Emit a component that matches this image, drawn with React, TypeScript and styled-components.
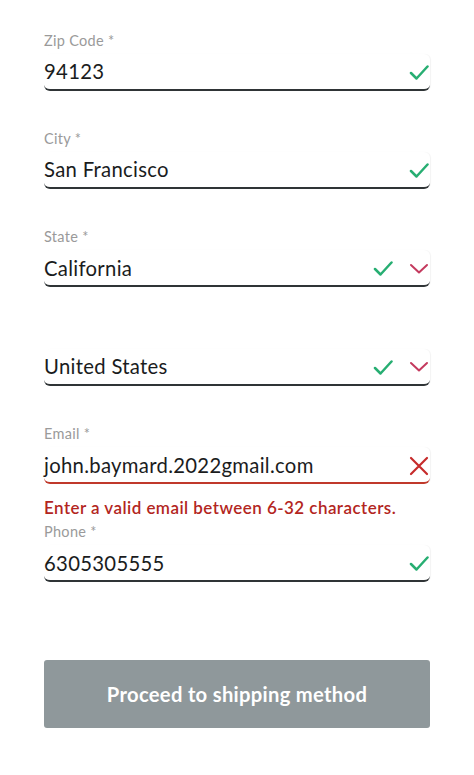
import React from "react";
import styled, { createGlobalStyle } from "styled-components";

const GlobalStyle = createGlobalStyle`
  html, body {
    margin: 0;
    padding: 0;
    background: #ffffff;
  }
  body {
    font-family: "Lato", "Open Sans", "Liberation Sans", sans-serif;
  }
`;

const Page = styled.div`
  width: 474px;
  min-height: 775px;
  box-sizing: border-box;
  padding: 30.5px 44px 0 44px;
  display: flex;
  flex-direction: column;
`;

const Field = styled.div`
  display: flex;
  flex-direction: column;
  height: 98.4px;
`;

const Label = styled.div`
  height: 19px;
  font-size: 14.5px;
  color: #9a9a9a;
  letter-spacing: 0.3px;
  line-height: 19px;
`;

const InputRow = styled.div<{ $error?: boolean }>`
  margin-top: 4px;
  height: 37px;
  box-sizing: border-box;
  display: flex;
  align-items: center;
  border-radius: 6px;
  border-bottom: 2px solid ${p => (p.$error ? "#c0392b" : "#2f3436")};
  box-shadow: 1px 0 1px rgba(0, 0, 0, 0.05);
`;

const Value = styled.div`
  flex: 1;
  font-size: 20.3px;
  color: #1a1c1d;
  letter-spacing: 0.3px;
`;

const Icons = styled.div`
  display: flex;
  align-items: center;
  gap: 16px;
  padding-right: 1px;
  padding-top: 2px;
`;

const ErrorText = styled.div`
  margin-top: 14px;
  font-size: 17px;
  font-weight: 600;
  color: #b3261e;
  letter-spacing: 0.45px;
  line-height: 20px;
`;

const Spacer = styled.div`
  height: 39px;
`;

const Button = styled.button`
  height: 68px;
  width: 100%;
  border: none;
  border-radius: 3px;
  background: #8f989b;
  color: #ffffff;
  font-family: "Lato", "Open Sans", "Liberation Sans", sans-serif;
  font-size: 20.2px;
  font-weight: 700;
  letter-spacing: 0.3px;
`;

const Check = () => (
  <svg width="20" height="17" viewBox="0 0 20 17">
    <path d="M2 9 L7.5 14.5 L18.5 2.5" fill="none" stroke="#27ae72" strokeWidth="2.5" strokeLinecap="round" strokeLinejoin="round" />
  </svg>
);

const Chevron = () => (
  <svg width="20" height="12" viewBox="0 0 20 12">
    <path d="M2 2 L10 9.5 L18 2" fill="none" stroke="#c43a5e" strokeWidth="2" strokeLinecap="round" strokeLinejoin="round" />
  </svg>
);

const Cross = () => (
  <svg width="20" height="20" viewBox="0 0 20 20">
    <path d="M2 2 L18 18 M18 2 L2 18" fill="none" stroke="#c62b2b" strokeWidth="2.2" strokeLinecap="round" />
  </svg>
);

type FieldData = {
  label?: string;
  value: string;
  status: "ok" | "error";
  select?: boolean;
  error?: string;
};

const fields: FieldData[] = [
  { label: "Zip Code *", value: "94123", status: "ok" },
  { label: "City *", value: "San Francisco", status: "ok" },
  { label: "State *", value: "California", status: "ok", select: true },
  { value: "United States", status: "ok", select: true },
  {
    label: "Email *",
    value: "john.baymard.2022gmail.com",
    status: "error",
    error: "Enter a valid email between 6-32 characters.",
  },
  { label: "Phone *", value: "6305305555", status: "ok" },
];

export default function App() {
  return (
    <>
      <GlobalStyle />
      <Page>
        {fields.map(f => (
          <Field key={f.value}>
            <Label>{f.label ?? ""}</Label>
            <InputRow $error={f.status === "error"}>
              <Value>{f.value}</Value>
              <Icons>
                {f.status === "ok" ? <Check /> : <Cross />}
                {f.select && <Chevron />}
              </Icons>
            </InputRow>
            {f.error && <ErrorText>{f.error}</ErrorText>}
          </Field>
        ))}
        <Spacer />
        <Button>Proceed to shipping method</Button>
      </Page>
    </>
  );
}
